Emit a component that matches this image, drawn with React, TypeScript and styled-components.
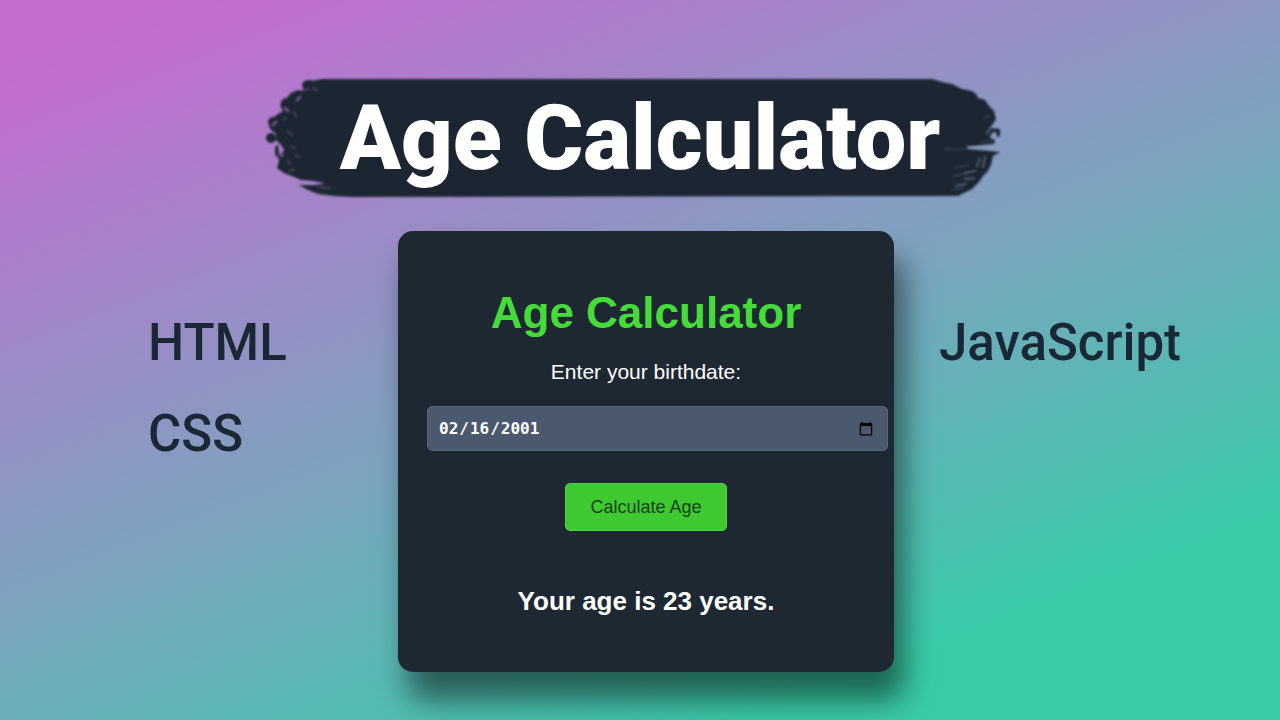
import React from 'react';
import styled, { createGlobalStyle } from 'styled-components';

const GlobalStyle = createGlobalStyle`
  *, *::before, *::after { box-sizing: border-box; }
  body { margin: 0; }
`;

const Page = styled.main`
  min-height: 100vh;
  padding-top: 76px;
  overflow: hidden;
  background: linear-gradient(159deg, #c56bd0 0%, #c36cd0 7%, #7da3bf 50%, #39cba8 83%, #39cba8 100%);
`;

const Banner = styled.header`
  position: relative;
  display: flex;
  justify-content: center;
  align-items: center;
  height: 124px;
`;

const BrushStroke = styled.svg`
  position: absolute;
  left: calc(50% - 380px);
  top: 0;
  width: 746px;
  height: 124px;
`;

const Title = styled.h1`
  position: relative;
  margin: 0;
  padding-top: 2px;
  font: 900 90px/120px Roboto, sans-serif;
  color: #fff;
  white-space: nowrap;
`;

const Showcase = styled.section`
  display: grid;
  grid-template-columns: 1fr 496px 1fr;
  padding: 31px 0 48px 12px;
`;

const Topics = styled.ul<{ $inset: number }>`
  list-style: none;
  margin: 0;
  padding: 66px 0 0 ${(p) => p.$inset}px;
  font: 500 51px/91px Roboto, sans-serif;
  color: #1a2734;
`;

const Card = styled.form`
  display: flex;
  flex-direction: column;
  align-items: center;
  padding: 56px 29px 55px;
  border-radius: 15px;
  background: #1e2833;
  color: #fff;
  font-family: "Liberation Sans", Arial, sans-serif;
  box-shadow: 10px 28px 30px rgba(0, 0, 0, 0.5);
`;

const CardTitle = styled.h2`
  margin: 0 0 21px;
  font-size: 44px;
  line-height: 52px;
  color: #45dc39;
`;

const Label = styled.label`
  margin-bottom: 22px;
  font-size: 21px;
  line-height: 24px;
`;

const DateInput = styled.input`
  align-self: flex-start;
  width: calc(100% + 23px);
  height: 45px;
  margin-bottom: 32px;
  padding: 0 11px 0 10px;
  border: 1px solid #56647a;
  border-radius: 5px;
  background: #4b596e;
  color: #fff;
  font: 700 16px "DejaVu Sans Mono", monospace;
`;

const CalculateButton = styled.button`
  height: 48px;
  margin-bottom: 54px;
  padding: 0 24px;
  border: 1px solid #55d249;
  border-radius: 5px;
  background: #3fc931;
  color: #124417;
  font: 18px "Liberation Sans", Arial, sans-serif;
`;

const Result = styled.output`
  font-size: 26px;
  font-weight: 700;
  line-height: 32px;
`;

export default function App() {
  return (
    <>
      <GlobalStyle />
      <Page>
        <Banner>
          <BrushStroke viewBox="260 76 746 124" aria-hidden="true">
            <defs>
              <filter id="soft" x="-5%" y="-10%" width="110%" height="120%">
                <feGaussianBlur stdDeviation="1" />
              </filter>
            </defs>
            <g fill="#1e2833" filter="url(#soft)">
              <path d="M322 79 L932 79 L942 82 L952 84 L962 89 L972 91 L977 95 L978 98 L985 100 L989 106 L994 111 L996 119 L993 124 L990 128 L1000 129 L1000 136 L997 137 L996 132 L992 133 L990 138 L995 140 L994 144 L966 147 L970 149 L1000 152 L993 156 L991 165 L988 171 L983 176 L979 182 L972 189 L962 194 L958 196 L350 197 L334 196 L318 194 L308 190 L299 185 L314 185 L324 183 L312 181 L301 180 L294 177 L284 173 L277 168 L279 161 L278 156 L284 150 L280 144 L276 140 L276 134 L270 129 L269 125 L272 119 L278 114 L283 111 L280 105 L286 99 L291 93 L298 90 L303 91 L303 86 L311 81 Z" />
              <ellipse cx="271" cy="138" rx="5" ry="5" />
              <ellipse cx="277" cy="151" rx="2" ry="6" />
              <ellipse cx="287" cy="103" rx="6" ry="5" />
              <ellipse cx="309" cy="85" rx="7" ry="5" />
              <ellipse cx="274" cy="122" rx="6" ry="5" />
            </g>
            <g fill="none" stroke="#a67cc4" strokeLinecap="round" filter="url(#soft)">
              <path strokeWidth="3" opacity="0.55" d="M281 147 l1 9 M273 125 l3 -3 M285 108 l3 3 M297 100 l3 -3" />
              <path strokeWidth="2" opacity="0.3" d="M288 131 l4 4 M291 146 l4 3 M283 120 l3 -2 M287 160 l3 4 M290 171 l4 -2 M304 90 l5 -1 M296 155 l3 2 M313 88 l4 2 M294 112 l2 5 M303 182 l20 2 M318 187 l12 1" />
            </g>
            <g fill="none" stroke="#7f93b4" strokeLinecap="round" filter="url(#soft)">
              <path strokeWidth="2" opacity="0.5" d="M968 147 h22 M980 158 l-3 8 M985 157 l-2 10 M975 171 l-10 2 M974 178 l-9 1 M966 184 l-10 2 M990 128 l-3 6 M994 133 l-2 4" />
              <path strokeWidth="1" opacity="0.4" d="M945 149 h28 M955 168 l14 -3 M953 176 l12 -2 M952 190 l12 -2 M984 118 l6 -2 M980 142 h12" />
            </g>
          </BrushStroke>
          <Title>Age Calculator</Title>
        </Banner>
        <Showcase>
          <Topics $inset={136}>
            <li>HTML</li>
            <li>CSS</li>
          </Topics>
          <Card onSubmit={(e: React.FormEvent) => e.preventDefault()}>
            <CardTitle>Age Calculator</CardTitle>
            <Label htmlFor="birthdate">Enter your birthdate:</Label>
            <DateInput id="birthdate" type="date" defaultValue="2001-02-16" />
            <CalculateButton type="submit">Calculate Age</CalculateButton>
            <Result htmlFor="birthdate">Your age is 23 years.</Result>
          </Card>
          <Topics $inset={45}>
            <li>JavaScript</li>
          </Topics>
        </Showcase>
      </Page>
    </>
  );
}
